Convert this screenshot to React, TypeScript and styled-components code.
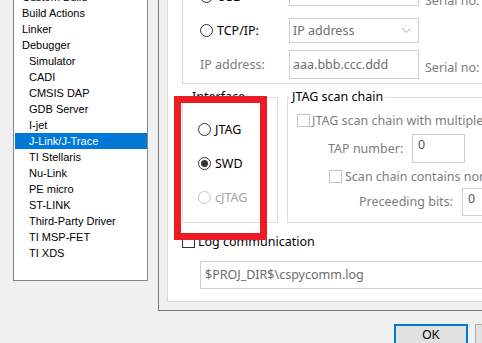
import React from 'react';
import styled, { createGlobalStyle } from 'styled-components';

const GlobalStyle = createGlobalStyle`
  html, body {
    margin: 0;
    padding: 0;
    background: #f0f0f0;
    overflow: hidden;
  }
  * { box-sizing: border-box; }
`;

const uiFont = `"Noto Sans", "Open Sans", sans-serif`;
const listFont = `"Liberation Sans", Arial, sans-serif`;

interface Section {
  label: string;
  depth: number;
  selected?: boolean;
}

const sections: Section[] = [
  { label: 'Custom Build', depth: 0 },
  { label: 'Build Actions', depth: 0 },
  { label: 'Linker', depth: 0 },
  { label: 'Debugger', depth: 0 },
  { label: 'Simulator', depth: 1 },
  { label: 'CADI', depth: 1 },
  { label: 'CMSIS DAP', depth: 1 },
  { label: 'GDB Server', depth: 1 },
  { label: 'I-jet', depth: 1 },
  { label: 'J-Link/J-Trace', depth: 1, selected: true },
  { label: 'TI Stellaris', depth: 1 },
  { label: 'Nu-Link', depth: 1 },
  { label: 'PE micro', depth: 1 },
  { label: 'ST-LINK', depth: 1 },
  { label: 'Third-Party Driver', depth: 1 },
  { label: 'TI MSP-FET', depth: 1 },
  { label: 'TI XDS', depth: 1 },
];

const App: React.FC = () => (
  <>
    <GlobalStyle />
    <Screen>
      <Dialog>
        <Body>
          <ListBox>
            {sections.map(s => (
              <Item key={s.label} $depth={s.depth} $selected={s.selected}>
                {s.label}
              </Item>
            ))}
          </ListBox>

          <TabFrame>
            <Page>
              <ConnectionGroup>
                <FieldRow $height={25}>
                  <Lead $shift={6}>
                    <Radio />
                    <Caption>USB</Caption>
                  </Lead>
                  <Field />
                  <SideLabel $drop={14}>Serial no:</SideLabel>
                </FieldRow>
                <FieldRow $height={25} $gap={12}>
                  <Lead>
                    <Radio />
                    <Caption>TCP/IP:</Caption>
                  </Lead>
                  <Field>
                    <FieldText>IP address</FieldText>
                    <svg width="9" height="5" viewBox="0 0 9 5">
                      <polyline points="0.5,0.5 4.5,4.5 8.5,0.5" fill="none" stroke="#a8a8a8" strokeWidth="1" />
                    </svg>
                  </Field>
                </FieldRow>
                <FieldRow $height={29} $gap={7}>
                  <Lead>
                    <Caption $muted>IP address:</Caption>
                  </Lead>
                  <Field>
                    <FieldText>aaa.bbb.ccc.ddd</FieldText>
                  </Field>
                  <SideLabel $drop={6}>Serial no:</SideLabel>
                </FieldRow>
              </ConnectionGroup>

              <GroupRow>
                <GroupBox $width={96}>
                  <GroupTitle $offset={7}>Interface</GroupTitle>
                  <RadioList>
                    <Choice>
                      <Radio />
                      <Caption>JTAG</Caption>
                    </Choice>
                    <Choice>
                      <Radio $checked />
                      <Caption>SWD</Caption>
                    </Choice>
                    <Choice>
                      <Radio $disabled />
                      <Caption $faint>cJTAG</Caption>
                    </Choice>
                  </RadioList>
                </GroupBox>

                <GroupBox>
                  <GroupTitle $offset={2}>JTAG scan chain</GroupTitle>
                  <ScanBody>
                    <Choice $indent={9} $top={9}>
                      <Check $disabled />
                      <Caption $muted $gap={2}>JTAG scan chain with multiple targets</Caption>
                    </Choice>
                    <NumberRow $indent={40} $top={7} $height={29}>
                      <NumberLabel $width={84}>TAP number:</NumberLabel>
                      <NumberBox $width={53}>0</NumberBox>
                    </NumberRow>
                    <Choice $indent={41} $top={7}>
                      <Check $disabled />
                      <Caption $muted $gap={3}>Scan chain contains non-ARM devices</Caption>
                    </Choice>
                    <NumberRow $indent={71} $top={5} $height={28}>
                      <NumberLabel $width={103}>Preceeding bits:</NumberLabel>
                      <NumberBox $width={53}>0</NumberBox>
                    </NumberRow>
                  </ScanBody>
                </GroupBox>
              </GroupRow>

              <Choice $top={12}>
                <Check />
                <Caption $gap={3}>Log communication</Caption>
              </Choice>
              <PathField>$PROJ_DIR$\cspycomm.log</PathField>
            </Page>
          </TabFrame>
        </Body>

        <ButtonBar>
          <Button $default>OK</Button>
          <Button>Cancel</Button>
        </ButtonBar>
      </Dialog>

      <Highlight />
    </Screen>
  </>
);

const Screen = styled.div`
  position: relative;
  width: 482px;
  height: 343px;
  overflow: hidden;
  background: #f0f0f0;
`;

const Dialog = styled.div`
  width: 560px;
  margin-top: -50px;
`;

const Body = styled.div`
  display: flex;
  align-items: flex-start;
`;

const ListBox = styled.ul`
  flex: none;
  list-style: none;
  width: 135px;
  height: 295px;
  margin: 36px 0 0 13px;
  padding: 2px 0 0 1px;
  border: 1px solid #858585;
  background: #fff;
  overflow: hidden;
  font-family: ${listFont};
  font-size: 11px;
`;

const Item = styled.li<{ $depth: number; $selected?: boolean }>`
  height: 16px;
  line-height: 16px;
  padding-left: ${p => (p.$depth ? 14 : 7)}px;
  white-space: nowrap;
  color: ${p => (p.$selected ? '#fff' : '#000')};
  background: ${p => (p.$selected ? '#0078d7' : 'transparent')};
`;

const TabFrame = styled.div`
  flex: 1;
  margin-left: 10px;
  padding: 9px 8px 8px;
  border: 1px solid #767676;
`;

const Page = styled.div`
  padding: 0 0 12px 14px;
  border: 1px solid #d9d9d9;
  background: #fff;
  font-family: ${uiFont};
  font-size: 12.5px;
  color: #000;
`;

const ConnectionGroup = styled.div`
  padding: 19px 0 4px 17px;
  border: 1px solid #dcdcdc;
`;

const FieldRow = styled.div<{ $height: number; $gap?: number }>`
  display: flex;
  align-items: center;
  height: ${p => p.$height}px;
  margin-top: ${p => p.$gap ?? 0}px;
`;

const Lead = styled.div<{ $shift?: number }>`
  flex: none;
  display: flex;
  align-items: center;
  width: 89px;
  margin-top: ${p => p.$shift ?? 0}px;
`;

const Field = styled.div`
  flex: none;
  display: flex;
  align-items: center;
  justify-content: space-between;
  width: 130px;
  height: 100%;
  padding: 0 7px 0 3px;
  border: 1px solid #cfcfcf;
  background: #fff;
`;

const FieldText = styled.span`
  line-height: 16px;
  color: #6d6d6d;
  white-space: nowrap;
`;

const SideLabel = styled.span<{ $drop: number }>`
  margin: ${p => p.$drop}px 0 0 6px;
  line-height: 16px;
  color: #7d7d7d;
  white-space: nowrap;
`;

const Caption = styled.span<{ $muted?: boolean; $faint?: boolean; $gap?: number }>`
  margin-left: ${p => p.$gap ?? 4}px;
  line-height: 16px;
  white-space: nowrap;
  color: ${p => (p.$faint ? '#a6a6a6' : p.$muted ? '#7d7d7d' : '#000')};
  &:first-child { margin-left: 0; }
`;

const Radio = styled.span<{ $checked?: boolean; $disabled?: boolean }>`
  flex: none;
  display: inline-flex;
  align-items: center;
  justify-content: center;
  width: 13px;
  height: 13px;
  border: 1px solid ${p => (p.$disabled ? '#c4c4c4' : '#333')};
  border-radius: 50%;
  background: #fff;
  &::after {
    content: '';
    display: ${p => (p.$checked ? 'block' : 'none')};
    width: 7px;
    height: 7px;
    border-radius: 50%;
    background: #333;
  }
`;

const Check = styled.span<{ $disabled?: boolean }>`
  flex: none;
  width: 13px;
  height: 13px;
  border: 1px solid ${p => (p.$disabled ? '#c4c4c4' : '#333')};
  background: #fff;
`;

const GroupRow = styled.div`
  display: flex;
  margin-top: 5px;
`;

const GroupBox = styled.fieldset<{ $width?: number }>`
  flex: ${p => (p.$width ? 'none' : '1')};
  width: ${p => (p.$width ? `${p.$width}px` : 'auto')};
  min-width: 0;
  margin: 0 9px 0 0;
  padding: 0;
  border: 1px solid #dcdcdc;
  &:last-child { margin-right: 0; }
`;

const GroupTitle = styled.legend<{ $offset: number }>`
  margin-left: ${p => p.$offset}px;
  padding: 0 2px;
  line-height: 16px;
  white-space: nowrap;
`;

const RadioList = styled.div`
  display: flex;
  flex-direction: column;
  gap: 21px;
  padding: 18px 0 18px 15px;
`;

const Choice = styled.label<{ $indent?: number; $top?: number }>`
  display: flex;
  align-items: center;
  height: 13px;
  margin: ${p => p.$top ?? 0}px 0 0 ${p => p.$indent ?? 0}px;
`;

const ScanBody = styled.div`
  display: flex;
  flex-direction: column;
  padding-bottom: 6px;
`;

const NumberRow = styled.div<{ $indent: number; $top: number; $height: number }>`
  display: flex;
  align-items: center;
  height: ${p => p.$height}px;
  margin: ${p => p.$top}px 0 0 ${p => p.$indent}px;
`;

const NumberLabel = styled.span<{ $width: number }>`
  flex: none;
  width: ${p => p.$width}px;
  line-height: 16px;
  color: #7d7d7d;
  white-space: nowrap;
`;

const NumberBox = styled.div<{ $width: number }>`
  flex: none;
  width: ${p => p.$width}px;
  height: 100%;
  padding: 2px 0 0 5px;
  border: 1px solid #cfcfcf;
  line-height: 16px;
  color: #555;
`;

const PathField = styled.div`
  height: 28px;
  margin: 13px 0 0 18px;
  padding-left: 4px;
  border: 1px solid #cfcfcf;
  border-right: none;
  line-height: 26px;
  color: #6d6d6d;
  white-space: nowrap;
`;

const ButtonBar = styled.div`
  display: flex;
  gap: 7px;
  margin-top: 13px;
  padding-left: 394px;
`;

const Button = styled.div<{ $default?: boolean }>`
  flex: none;
  width: 74px;
  height: 23px;
  border: ${p => (p.$default ? '2px solid #0078d7' : '1px solid #adadad')};
  background: #e1e1e1;
  font-family: ${listFont};
  font-size: 12px;
  line-height: ${p => (p.$default ? 19 : 21)}px;
  text-align: center;
  color: #000;
`;

const Highlight = styled.div`
  position: absolute;
  left: 174px;
  top: 96px;
  width: 93px;
  height: 144px;
  border: 7px solid #ed1c24;
  pointer-events: none;
`;

export default App;
